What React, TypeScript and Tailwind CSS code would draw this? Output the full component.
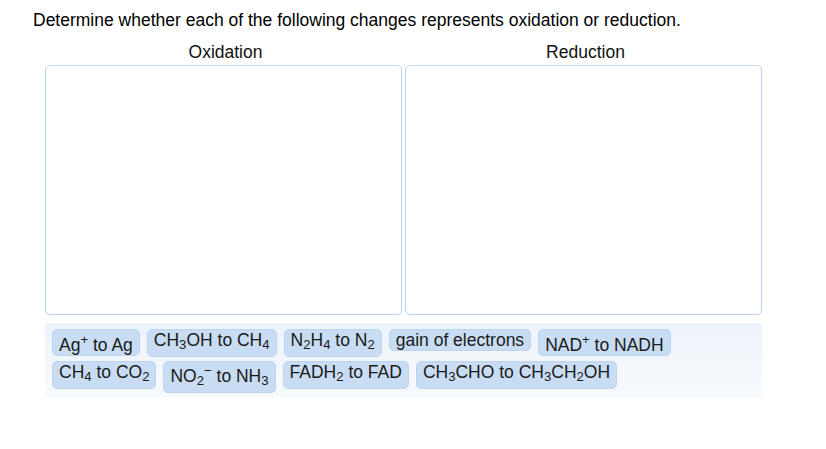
import React from 'react';

type Part = { t: string; sub?: boolean; sup?: boolean };

interface Tile {
    id: string;
    parts: Part[];
    pad: string;
}

// helpers for chemical formulas
const s = (t: string): Part => ({ t });
const sub = (t: string): Part => ({ t, sub: true });
const sup = (t: string): Part => ({ t, sup: true });

const tiles: Tile[] = [
    { id: 'ag', parts: [s('Ag'), sup('+'), s(' to Ag')], pad: 'pt-[5px]' },
    { id: 'ch3oh', parts: [s('CH'), sub('3'), s('OH to CH'), sub('4')], pad: 'pb-[6px]' },
    { id: 'n2h4', parts: [s('N'), sub('2'), s('H'), sub('4'), s(' to N'), sub('2')], pad: 'pb-[6px]' },
    { id: 'gain', parts: [s('gain of electrons')], pad: '' },
    { id: 'nad', parts: [s('NAD'), sup('+'), s(' to NADH')], pad: 'pt-[5px]' },
    { id: 'ch4', parts: [s('CH'), sub('4'), s(' to CO'), sub('2')], pad: 'pb-[6px]' },
    { id: 'no2', parts: [s('NO'), sub('2'), sup('\u2212'), s(' to NH'), sub('3')], pad: 'pt-[4px] pb-[6px]' },
    { id: 'fadh2', parts: [s('FADH'), sub('2'), s(' to FAD')], pad: 'pb-[6px]' },
    { id: 'ch3cho', parts: [s('CH'), sub('3'), s('CHO to CH'), sub('3'), s('CH'), sub('2'), s('OH')], pad: 'pb-[6px]' },
];

const Formula = ({ parts }: { parts: Part[] }) => (
    <>
        {parts.map((p, i) => {
            if (p.sub) return <sub key={i}>{p.t}</sub>;
            if (p.sup) return <sup key={i}>{p.t}</sup>;
            return <span key={i} className="whitespace-pre">{p.t}</span>;
        })}
    </>
);

const DragTile = ({ tile }: { tile: Tile }) => (
    <div
        className={`px-[6px] ${tile.pad} bg-[#c8ddf3] border border-[#bcd4ee] rounded-[5px] text-[#1a1a1a] leading-[20px] whitespace-nowrap cursor-move`}
    >
        <Formula parts={tile.parts} />
    </div>
);

export default function App() {
    return (
        <div
            className="w-[826px] h-[449px] bg-white text-black text-[17.5px] pl-[33px] pt-[10px]"
            style={{ fontFamily: '"Liberation Sans", Arial, sans-serif' }}
        >
            <p className="leading-[20px]">
                Determine whether each of the following changes represents oxidation or reduction.
            </p>

            <div className="ml-[12px] w-[717px] mt-[12px]">
                <div className="grid grid-cols-2 gap-x-[3px]">
                    <div className="pl-[4px] text-center leading-[20px] text-[#111]">Oxidation</div>
                    <div className="pl-[4px] text-center leading-[20px] text-[#111]">Reduction</div>
                    <div className="mt-[3px] h-[250px] rounded-[5px] border border-[#b9d2ee] border-t-[#c9ddf3] bg-white" />
                    <div className="mt-[3px] h-[250px] rounded-[5px] border border-[#b9d2ee] border-t-[#c9ddf3] bg-white" />
                </div>

                {/* pool of answers still to be sorted */}
                <div className="mt-[8px] flex flex-wrap items-start gap-x-[7px] gap-y-[4px] px-[7px] pt-[6px] pb-[4px] rounded-[4px] bg-gradient-to-b from-[#edf3fb] to-[#f7fafd]">
                    {tiles.map((t) => (
                        <DragTile key={t.id} tile={t} />
                    ))}
                </div>
            </div>
        </div>
    );
}
